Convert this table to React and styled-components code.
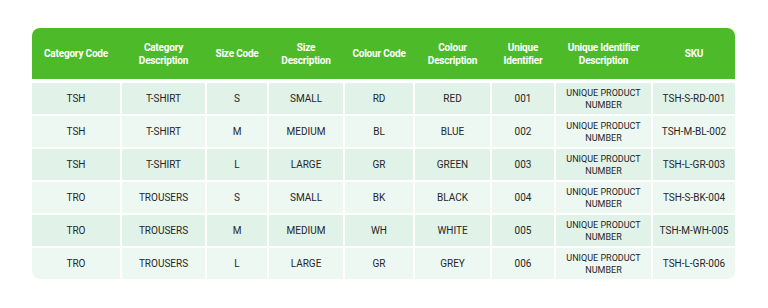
import React from 'react'
import styled, { createGlobalStyle } from 'styled-components'

const GlobalStyle = createGlobalStyle`
  body {
    margin: 0;
    background: #fff;
    font-family: Roboto, "Liberation Sans", Arial, sans-serif;
  }
`

const COLS = '88px 83px 60px 74px 68px 75px 62px 95px 82px'

const Table = styled.div`
  width: 703px;
  margin: 28px 0 0 32px;
  border-radius: 8px;
  overflow: hidden;
  background: #fff;
`

const HeadRow = styled.div`
  display: grid;
  grid-template-columns: ${COLS};
  column-gap: 2px;
  height: 51px;
  align-items: center;
  background: #4dbb29;
`

const HeadCell = styled.div`
  color: #fff;
  font-weight: 700;
  font-size: 10px;
  line-height: 13px;
  text-align: center;
  padding: 0 4px;
  letter-spacing: -0.2px;
`

const Body = styled.div`
  display: grid;
  row-gap: 2px;
  margin-top: 4px;
`

const Row = styled.div`
  display: grid;
  grid-template-columns: ${COLS};
  column-gap: 2px;
  height: 31px;
`

const Cell = styled.div`
  display: flex;
  align-items: center;
  justify-content: center;
  text-align: center;
  padding: 0 ${p => (p.$small ? '8px' : '2px')};
  white-space: ${p => (p.$small ? 'normal' : 'nowrap')};
  background: ${p => (p.$alt ? '#eef8f2' : '#e1f2e8')};
  color: #262626;
  font-size: ${p => (p.$small ? '9px' : '10px')};
  line-height: 12px;
`

const headers = [
  'Category Code',
  'Category Description',
  'Size Code',
  'Size Description',
  'Colour Code',
  'Colour Description',
  'Unique Identifier',
  'Unique Identifier Description',
  'SKU'
]

const rows = [
  ['TSH', 'T-SHIRT', 'S', 'SMALL', 'RD', 'RED', '001', 'TSH-S-RD-001'],
  ['TSH', 'T-SHIRT', 'M', 'MEDIUM', 'BL', 'BLUE', '002', 'TSH-M-BL-002'],
  ['TSH', 'T-SHIRT', 'L', 'LARGE', 'GR', 'GREEN', '003', 'TSH-L-GR-003'],
  ['TRO', 'TROUSERS', 'S', 'SMALL', 'BK', 'BLACK', '004', 'TSH-S-BK-004'],
  ['TRO', 'TROUSERS', 'M', 'MEDIUM', 'WH', 'WHITE', '005', 'TSH-M-WH-005'],
  ['TRO', 'TROUSERS', 'L', 'LARGE', 'GR', 'GREY', '006', 'TSH-L-GR-006']
]

export default function App () {
  return (
    <>
      <GlobalStyle />
      <Table>
        <HeadRow>
          {headers.map(h => <HeadCell key={h}>{h}</HeadCell>)}
        </HeadRow>
        <Body>
          {rows.map((r, i) => {
            const alt = i % 2 === 1
            return (
              <Row key={i}>
                {r.slice(0, 7).map((v, j) => <Cell key={j} $alt={alt}>{v}</Cell>)}
                <Cell $alt={alt} $small>UNIQUE PRODUCT NUMBER</Cell>
                <Cell $alt={alt}>{r[7]}</Cell>
              </Row>
            )
          })}
        </Body>
      </Table>
    </>
  )
}
